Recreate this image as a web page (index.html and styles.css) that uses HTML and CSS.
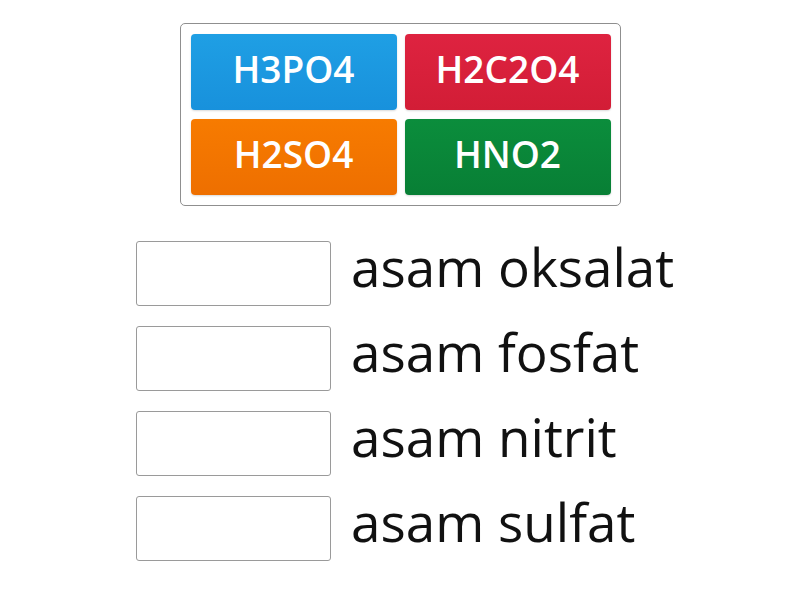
FILE: index.html
```html
<!DOCTYPE html>
<html lang="id">
<head>
  <meta charset="UTF-8" />
  <title>Asam</title>
  <link rel="stylesheet" href="styles.css">
</head>
<body>
  <div class="pilihan">
    <div class="kartu biru">H3PO4</div>
    <div class="kartu merah">H2C2O4</div>
    <div class="kartu oranye">H2SO4</div>
    <div class="kartu hijau">HNO2</div>
  </div>

  <div class="jawaban">
    <div class="baris">
      <div class="kotak"></div>
      <span class="nama">asam oksalat</span>
    </div>
    <div class="baris">
      <div class="kotak"></div>
      <span class="nama">asam fosfat</span>
    </div>
    <div class="baris">
      <div class="kotak"></div>
      <span class="nama">asam nitrit</span>
    </div>
    <div class="baris">
      <div class="kotak"></div>
      <span class="nama">asam sulfat</span>
    </div>
  </div>
</body>
</html>
```

FILE: styles.css
```css
body {
  background-color: #ffffff;
  font-family: 'Open Sans', 'DejaVu Sans', sans-serif;
  margin: 0;
  padding: 23px 0 0;
}
.pilihan {
  width: 419px;
  margin: 0 auto;
  padding: 10px;
  border: 1px solid #8f8f8f;
  border-radius: 5px;
  display: grid;
  grid-template-columns: 206px 206px;
  grid-auto-rows: 76px;
  column-gap: 8px;
  row-gap: 9px;
}
.kartu {
  border-radius: 4px;
  color: #ffffff;
  font-size: 37px;
  font-weight: 600;
  display: flex;
  align-items: center;
  justify-content: center;
  padding-bottom: 8px;
  box-shadow: 0 1px 2px rgba(0,0,0,0.15);
}
.biru { background: linear-gradient(#1f9fe4, #1891dc); }
.merah { background: linear-gradient(#de2340, #d21d36); }
.oranye { background: linear-gradient(#f77b00, #ee6f00); }
.hijau { background: linear-gradient(#0b8d3c, #087f35); }
.jawaban {
  width: 528px;
  margin: 35px auto 0;
  display: flex;
  flex-direction: column;
  gap: 20px;
}
.baris {
  display: flex;
  align-items: center;
  gap: 20px;
  height: 65px;
}
.kotak {
  width: 193px;
  height: 63px;
  border: 1px solid #9a9a9a;
  border-radius: 3px;
  background-color: #ffffff;
  flex-shrink: 0;
}
.nama {
  font-size: 53px;
  line-height: 53px;
  margin-bottom: 14px;
  color: #111111;
  white-space: nowrap;
}
```
